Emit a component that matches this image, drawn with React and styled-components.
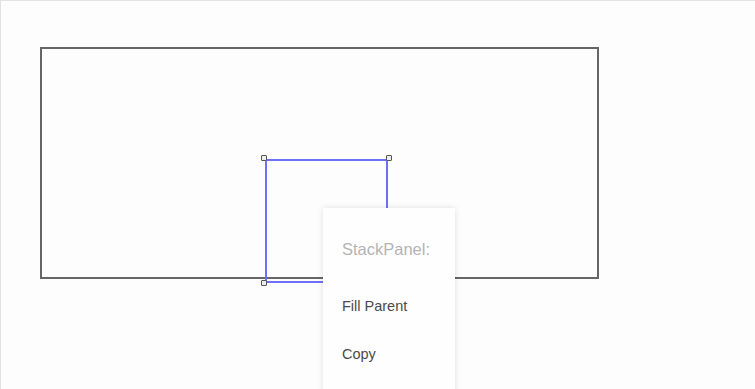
import React from "react";
import styled, { createGlobalStyle } from "styled-components";

const GlobalStyle = createGlobalStyle`
    html, body {
        margin : 0;
        padding : 0;
        background : #fdfdfd;
        font-family : "Liberation Sans", Arial, sans-serif;
    }
`

const Canvas = styled.div`
    position : relative;
    width : 755px;
    height : 389px;
    box-sizing : border-box;
    border-top : 1px solid #e2e2e2;
    border-left : 1px solid #e2e2e2;
    background : #fdfdfd;
    overflow : hidden;
`

// shapes on the free design canvas
const Frame = styled.div`
    position : absolute;
    left : ${props => props.x}px;
    top : ${props => props.y}px;
    width : ${props => props.w}px;
    height : ${props => props.h}px;
    box-sizing : border-box;
    border : ${props => props.stroke};
`

const Handle = styled.span`
    position : absolute;
    left : ${props => props.x - 3}px;
    top : ${props => props.y - 3}px;
    width : 6px;
    height : 6px;
    box-sizing : border-box;
    border : 1.5px solid #555;
    background : #ededed;
    border-radius : 1px;
`

const Menu = styled.div`
    position : absolute;
    left : 322px;
    top : 207px;
    width : 132px;
    height : 200px;
    background : #fefefe;
    box-shadow : 0 0 6px rgba(0, 0, 0, 0.12);
    display : flex;
    flex-direction : column;
    gap : 28px;
    padding : 30px 0 0 19px;
    box-sizing : border-box;
`

const MenuTitle = styled.div`
    font-size : 16.5px;
    color : #b4b4b4;
    height : 22px;
    line-height : 22px;
    margin-bottom : 8px;
`

const MenuItem = styled.div`
    font-size : 14.5px;
    color : #4a4a4a;
    height : 20px;
    line-height : 20px;
`

const App = () => {
    return(
        <>
        <GlobalStyle />
        <Canvas>
            <Frame x={39} y={46} w={559} h={232} stroke="2px solid #666" />
            <Frame x={264} y={158} w={123} h={124} stroke="2px solid #6f6ff5" />
            <Handle x={263} y={157} />
            <Handle x={388} y={157} />
            <Handle x={263} y={282} />
            <Menu>
                <MenuTitle>StackPanel:</MenuTitle>
                <MenuItem>Fill Parent</MenuItem>
                <MenuItem>Copy</MenuItem>
            </Menu>
        </Canvas>
        </>
    )
}

export default App;
